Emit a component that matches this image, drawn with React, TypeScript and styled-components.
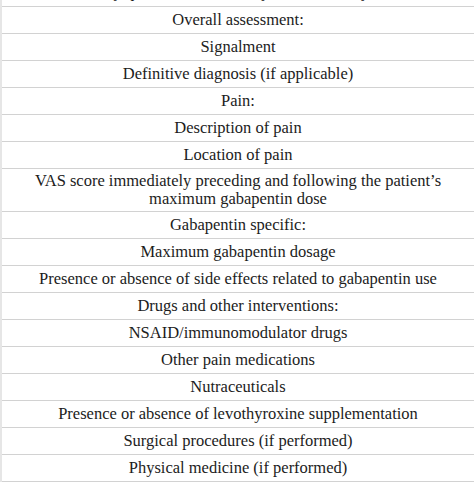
import React from "react"
import styled, { createGlobalStyle } from "styled-components"

const GlobalStyle = createGlobalStyle`
    html, body {
        margin: 0;
        padding: 0;
        background: #ffffff;
    }
    body {
        width: 474px;
        height: 483px;
        overflow: hidden;
    }
`

const Table = styled.div`
    display: flex;
    flex-direction: column;
    width: 474px;
    margin-top: -20px;
    border-left: 2px solid #e6e6e6;
    box-sizing: border-box;
    font-family: "Liberation Serif", "Times New Roman", serif;
    font-size: 16.5px;
    color: #1c1c1c;
`

const Row = styled.div<{ $tall?: boolean; $cut?: boolean }>`
    display: flex;
    align-items: ${({ $cut }) => ($cut ? "flex-end" : "center")};
    justify-content: center;
    box-sizing: border-box;
    height: ${({ $tall }) => ($tall ? "43px" : "27px")};
    border-bottom: 1px solid #d2d2d2;
    padding: 0 24px;
    text-align: center;
    line-height: ${({ $cut }) => ($cut ? "28px" : "18px")};
    overflow: hidden;
`

const rows: { text: string; tall?: boolean; cut?: boolean }[] = [
    { text: "Survey questionnaire: history and laboratory data", cut: true },
    { text: "Overall assessment:" },
    { text: "Signalment" },
    { text: "Definitive diagnosis (if applicable)" },
    { text: "Pain:" },
    { text: "Description of pain" },
    { text: "Location of pain" },
    { text: "VAS score immediately preceding and following the patient\u2019s maximum gabapentin dose", tall: true },
    { text: "Gabapentin specific:" },
    { text: "Maximum gabapentin dosage" },
    { text: "Presence or absence of side effects related to gabapentin use" },
    { text: "Drugs and other interventions:" },
    { text: "NSAID/immunomodulator drugs" },
    { text: "Other pain medications" },
    { text: "Nutraceuticals" },
    { text: "Presence or absence of levothyroxine supplementation" },
    { text: "Surgical procedures (if performed)" },
    { text: "Physical medicine (if performed)" },
]

const App: React.FC = () => (
    <>
        <GlobalStyle />
        <Table>
            {rows.map((row) => (
                <Row key={row.text} $tall={row.tall} $cut={row.cut}>{row.text}</Row>
            ))}
        </Table>
    </>
)

export default App
